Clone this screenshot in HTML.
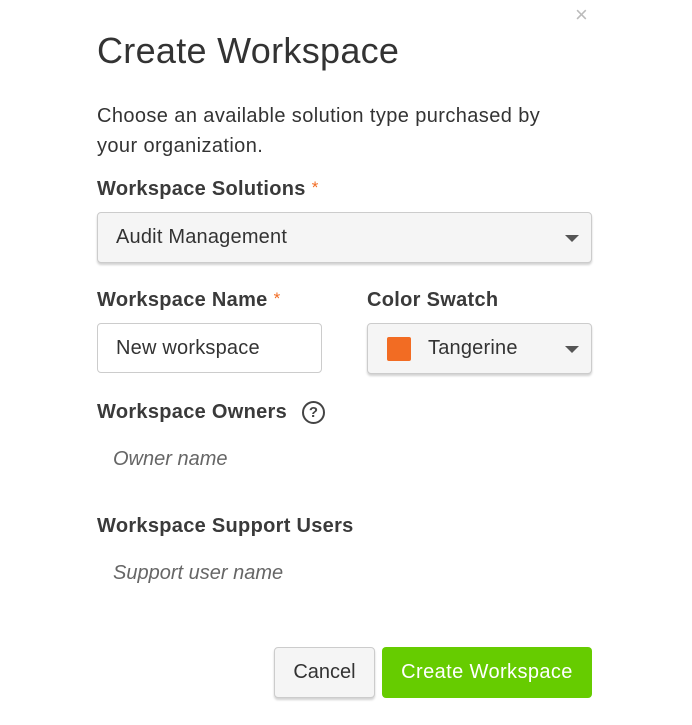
<!DOCTYPE html>
<html><head><style>
body{margin:0;width:692px;height:725px;background:#fff;font-family:"Liberation Sans",sans-serif;color:#333;position:relative;overflow:hidden}
.a{position:absolute;white-space:nowrap}
.lbl{font-weight:bold;font-size:20px;letter-spacing:0.3px;color:#3a3a3a}
.star{color:#f26c23;font-weight:normal;font-size:17px;vertical-align:top;margin-left:6px}
.box{position:absolute;box-sizing:border-box;border:1px solid #ccc;border-radius:4px}
.sel{background:#f5f5f5;box-shadow:0 2px 2px rgba(0,0,0,.18)}
.caret{position:absolute;right:12px;top:22px;width:0;height:0;border-left:7px solid transparent;border-right:7px solid transparent;border-top:7px solid #555}
.txt{position:absolute;left:18px;top:13px;font-size:20px;letter-spacing:0.2px;color:#333}
.ph{font-style:italic;font-size:20px;color:#666}
</style></head><body>
<div class="a" style="left:575px;top:2px;font-size:22px;color:#bbb">×</div>
<div class="a" style="left:97px;top:30px;font-size:36px;letter-spacing:0.3px;color:#333">Create Workspace</div>
<div class="a" style="left:97px;top:101px;font-size:20px;letter-spacing:0.4px;line-height:30px;color:#333;white-space:normal;width:480px">Choose an available solution type purchased by your organization.</div>
<div class="a lbl" style="left:97px;top:178px">Workspace Solutions<span class="star">*</span></div>
<div class="box sel" style="left:97px;top:212px;width:495px;height:51px"><span class="txt">Audit Management</span><span class="caret"></span></div>
<div class="a lbl" style="left:97px;top:289px">Workspace Name<span class="star">*</span></div>
<div class="a lbl" style="left:367px;top:289px">Color Swatch</div>
<div class="box" style="left:97px;top:323px;width:225px;height:50px"><span class="txt">New workspace</span></div>
<div class="box sel" style="left:367px;top:323px;width:225px;height:51px"><span style="position:absolute;left:19px;top:13px;width:24px;height:24px;background:#f26c23;border-radius:2px"></span><span class="txt" style="left:60px">Tangerine</span><span class="caret"></span></div>
<div class="a lbl" style="left:97px;top:401px">Workspace Owners</div>
<div class="a" style="left:302px;top:401px;width:23px;height:23px;border:2px solid #444;border-radius:50%;box-sizing:border-box;font-size:15px;font-weight:bold;text-align:center;line-height:19px;color:#444">?</div>
<div class="a ph" style="left:113px;top:448px">Owner name</div>
<div class="a lbl" style="left:97px;top:515px">Workspace Support Users</div>
<div class="a ph" style="left:113px;top:562px">Support user name</div>
<div class="box" style="left:274px;top:647px;width:101px;height:51px;background:#f5f5f5;box-shadow:0 2px 2px rgba(0,0,0,.18);text-align:center;line-height:49px;font-size:20px;color:#333">Cancel</div>
<div class="a" style="left:382px;top:647px;width:210px;height:51px;background:#66cc00;border-radius:4px;text-align:center;line-height:51px;font-size:20px;letter-spacing:0.4px;color:#fff">Create Workspace</div>
</body></html>
